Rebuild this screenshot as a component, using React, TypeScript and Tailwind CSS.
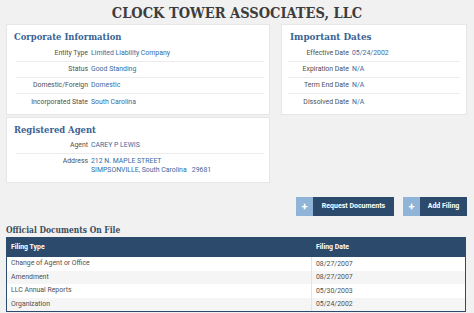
import React from 'react';

const serif = "font-['DejaVu_Serif',serif] [font-stretch:condensed] font-bold";
const sans = "font-['Roboto',sans-serif]";

const corporate = [
  ['Entity Type', 'Limited Liability Company'],
  ['Status', 'Good Standing'],
  ['Domestic/Foreign', 'Domestic'],
  ['Incorporated State', 'South Carolina'],
];

const dates = [
  ['Effective Date', '05/24/2002'],
  ['Expiration Date', 'N/A'],
  ['Term End Date', 'N/A'],
  ['Dissolved Date', 'N/A'],
];

const filings = [
  ['Change of Agent or Office', '08/27/2007'],
  ['Amendment', '08/27/2007'],
  ['LLC Annual Reports', '05/30/2003'],
  ['Organization', '05/24/2002'],
];

function InfoRow({ label, value, labelW, last }: { label: string; value: string; labelW: string; last?: boolean }) {
  return (
    <div className={`flex h-[16px] items-center ${last ? '' : 'border-b border-[#ececec]'}`}>
      <span className={`${labelW} shrink-0 text-right text-[#505050]`}>{label}</span>
      <span className="ml-[3px] text-[#3a6aa0]">{value}</span>
    </div>
  );
}

function ActionButton({ label, width }: { label: string; width: string }) {
  return (
    <button className={`flex h-[19px] ${width} items-stretch`}>
      <span className="flex w-[17px] items-center justify-center bg-[#8fb4d8] text-[11px] font-bold leading-none text-white">+</span>
      <span className="flex flex-1 items-center justify-center bg-[#2c4a6b] text-[7px] font-bold text-white">{label}</span>
    </button>
  );
}

export default function App() {
  return (
    <div className={`h-[313px] w-[474px] overflow-hidden bg-[#f1f1f1] ${sans} text-[6.9px]`}>
      {/* Title */}
      <h1 className={`${serif} h-[24px] text-center text-[14.5px] leading-[26px] text-[#3d3d3d]`}>
        CLOCK TOWER ASSOCIATES, LLC
      </h1>

      {/* Cards */}
      <div className="flex gap-[11px] pl-[6px]">
        <div className="flex w-[264px] flex-col gap-[2px]">
          <div className="h-[91px] border border-[#e6e6e6] bg-white pl-[9px] pr-[5px] pt-[5px]">
            <h2 className={`${serif} -ml-[2px] mb-[2px] h-[14px] text-[9.4px] leading-[14px] text-[#3b6291]`}>Corporate Information</h2>
            {corporate.map(([l, v], i) => (
              <InfoRow key={l} label={l} value={v} labelW="w-[72px]" last={i === corporate.length - 1} />
            ))}
          </div>
          <div className="h-[66px] border border-[#e6e6e6] bg-white pl-[9px] pr-[5px] pt-[5px]">
            <h2 className={`${serif} -ml-[2px] mb-[1px] h-[14px] text-[9.4px] leading-[14px] text-[#3b6291]`}>Registered Agent</h2>
            <InfoRow label="Agent" value="CAREY P LEWIS" labelW="w-[72px]" />
            <div className="flex pt-[3px] leading-[9px]">
              <span className="w-[72px] shrink-0 text-right text-[#505050]">Address</span>
              <span className="ml-[3px] text-[#3a6aa0]">
                212 N. MAPLE STREET
                <br />
                SIMPSONVILLE, South Carolina&nbsp;&nbsp;&nbsp;29681
              </span>
            </div>
          </div>
        </div>

        <div className="h-[91px] w-[186px] border border-[#e6e6e6] bg-white px-[6px] pt-[5px]">
          <h2 className={`${serif} mb-[2px] h-[14px] pl-[2px] text-[9.8px] leading-[14px] text-[#3b6291]`}>Important Dates</h2>
          {dates.map(([l, v], i) => (
            <InfoRow key={l} label={l} value={v} labelW="w-[61px]" last={i === dates.length - 1} />
          ))}
        </div>
      </div>

      {/* Buttons */}
      <div className="mt-[14px] flex justify-end gap-[9px] pr-[7px]">
        <ActionButton label="Request Documents" width="w-[98px]" />
        <ActionButton label="Add Filing" width="w-[64px]" />
      </div>

      {/* Documents */}
      <h3 className={`${serif} mt-[8px] h-[12px] pl-[6px] text-[8.4px] leading-[12px] text-[#3a4c5e]`}>Official Documents On File</h3>
      <div className="ml-[6px] mt-[1px] w-[460px] border border-[#2c4a6b] bg-white">
        <div className="flex h-[19px] items-center bg-[#2c4a6b] font-bold text-white">
          <span className="w-[305px] pl-[4px]">Filing Type</span>
          <span className="pl-[4px]">Filing Date</span>
        </div>
        {filings.map(([t, d], i) => (
          <div key={t} className={`flex h-[13.5px] items-center text-[#505050] ${i % 2 ? 'bg-[#f5f5f5]' : 'bg-white'}`}>
            <span className="w-[305px] border-r border-[#e4e4e4] pl-[4px] leading-[13.5px]">{t}</span>
            <span className="pl-[4px]">{d}</span>
          </div>
        ))}
      </div>
    </div>
  );
}
